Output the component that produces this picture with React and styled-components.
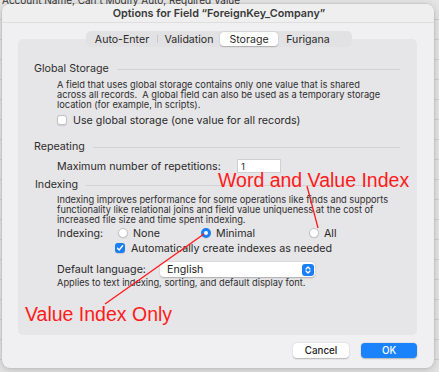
import React from 'react';
import styled, { createGlobalStyle } from 'styled-components';

const Global = createGlobalStyle`
  html, body { margin: 0; padding: 0; }
  body { font-family: Inter, "Liberation Sans", sans-serif; }
`;

const Page = styled.div`
  position: relative;
  width: 439px;
  height: 372px;
  overflow: hidden;
  background: repeating-linear-gradient(180deg, #e4e4e4 0px, #e4e4e4 19px, #cfcfcf 19px, #cfcfcf 20px);
  padding: 4px 0 0 2px;
  box-sizing: border-box;
`;

const BackText = styled.div`
  position: absolute;
  top: -6px;
  left: 2px;
  font-size: 10px;
  color: #333;
  white-space: nowrap;
`;

const Dialog = styled.div`
  width: 432px;
  height: 364px;
  background: #f0eff1;
  border-radius: 8px;
  box-shadow: 0 0 0 0.5px #bdbdbd, 0 2px 8px rgba(0, 0, 0, 0.18);
  display: flex;
  flex-direction: column;
  overflow: hidden;
`;

const TitleBar = styled.div`
  height: 18px;
  display: flex;
  align-items: center;
  justify-content: center;
  font-size: 10.8px;
  font-weight: 600;
  color: #3a3a3a;
  border-bottom: 1px solid #dedede;
  background: #efeff0;
  flex-shrink: 0;
  padding-left: 2px;
`;

const Body = styled.div`
  padding: 8px 17px 0 16px;
  display: flex;
  flex-direction: column;
  align-items: stretch;
`;

const Tabs = styled.div`
  align-self: center;
  margin-left: 3px;
  display: flex;
  align-items: center;
  height: 16px;
  padding: 0 1px;
  background: #e2e1e3;
  border-radius: 5px;
  margin-bottom: -8px;
  position: relative;
  z-index: 1;
  width: 266px;
  box-sizing: border-box;
`;

const Tab = styled.div`
  height: 14px;
  display: flex;
  align-items: center;
  justify-content: center;
  font-size: 10.6px;
  color: #2a2a2a;
  width: ${p => p.$w}px;
  border-radius: 4px;
  background: ${p => (p.$active ? '#ffffff' : 'transparent')};
  box-shadow: ${p => (p.$active ? '0 0.5px 1.5px rgba(0,0,0,0.25)' : 'none')};
`;

const TabSep = styled.div`
  width: 1px;
  height: 8px;
  background: #c9c9c9;
`;

const Box = styled.div`
  height: 296px;
  background: #e6e5e7;
  border-radius: 5px;
  padding: 23px 17px 0 16px;
  box-sizing: border-box;
  display: flex;
  flex-direction: column;
`;

const Section = styled.div`
  display: flex;
  align-items: center;
  gap: 8px;
  font-size: 10.7px;
  color: #2e2e2e;
  height: 12px;
  margin-top: ${p => p.$mt || 0}px;
  padding-left: ${p => p.$pl || 0}px;
  &::after {
    content: '';
    flex: 1;
    border-top: 1px solid #d2d2d4;
    margin-top: 2px;
  }
`;

const Desc = styled.div`
  font-size: 9.25px;
  line-height: 10px;
  color: #2e2e2e;
  padding-left: 23px;
  margin-top: ${p => p.$mt || 0}px;
  white-space: nowrap;
`;

const Row = styled.div`
  display: flex;
  align-items: center;
  font-size: 10.7px;
  color: #2a2a2a;
  padding-left: ${p => p.$pl || 23}px;
  margin-top: ${p => p.$mt || 0}px;
  height: ${p => p.$h || 14}px;
`;

const CheckBox = styled.span`
  width: 10px;
  height: 10px;
  border-radius: 3px;
  box-sizing: border-box;
  background: ${p => (p.$on ? '#1a7ff5' : '#ffffff')};
  border: ${p => (p.$on ? 'none' : '0.5px solid #c4c4c4')};
  box-shadow: 0 0.5px 1px rgba(0,0,0,0.12);
  display: inline-flex;
  align-items: center;
  justify-content: center;
  margin-right: 6px;
  flex-shrink: 0;
`;

const Radio = styled.span`
  width: 10px;
  height: 10px;
  border-radius: 50%;
  box-sizing: border-box;
  background: ${p => (p.$on ? '#1a7ff5' : '#ffffff')};
  border: ${p => (p.$on ? 'none' : '0.5px solid #c4c4c4')};
  box-shadow: 0 0.5px 1px rgba(0,0,0,0.12);
  display: inline-flex;
  align-items: center;
  justify-content: center;
  margin-right: 5px;
  flex-shrink: 0;
  &::after {
    content: '';
    width: 4px;
    height: 4px;
    border-radius: 50%;
    background: #fff;
    display: ${p => (p.$on ? 'block' : 'none')};
  }
`;

const Option = styled.label`
  display: flex;
  align-items: center;
  width: ${p => p.$w}px;
`;

const Label = styled.span`
  width: ${p => p.$w}px;
  flex-shrink: 0;
`;

const Field = styled.div`
  width: 44px;
  height: 14px;
  background: #fff;
  border: 0.5px solid #d0d0d0;
  box-sizing: border-box;
  font-size: 9.5px;
  display: flex;
  align-items: center;
  padding-left: 3px;
`;

const Popup = styled.div`
  width: 155px;
  height: 15px;
  border-radius: 4px;
  background: #fff;
  box-shadow: 0 0.5px 1.5px rgba(0,0,0,0.25);
  display: flex;
  align-items: center;
  justify-content: space-between;
  padding: 0 1.5px 0 7px;
  box-sizing: border-box;
  font-size: 10.7px;
  color: #222;
`;

const Stepper = styled.span`
  width: 12px;
  height: 12px;
  border-radius: 3px;
  background: #1a7ff5;
  display: inline-flex;
  align-items: center;
  justify-content: center;
`;

const Footer = styled.div`
  display: flex;
  justify-content: flex-end;
  gap: 12px;
  padding: 8px 17px 0 0;
`;

const Button = styled.div`
  width: 56px;
  height: 15px;
  border-radius: 4px;
  display: flex;
  align-items: center;
  justify-content: center;
  font-size: 9.8px;
  font-weight: 500;
  color: ${p => (p.$primary ? '#fff' : '#222')};
  background: ${p => (p.$primary ? '#1a82fb' : '#fff')};
  box-shadow: 0 0.5px 1.5px rgba(0,0,0,0.25);
`;

const Note = styled.div`
  position: absolute;
  left: ${p => p.$x}px;
  top: ${p => p.$y}px;
  font-family: "Liberation Sans", Arial, sans-serif;
  font-size: 19.5px;
  line-height: 14px;
  color: #ff1a1a;
  white-space: nowrap;
`;

const Overlay = styled.svg`
  position: absolute;
  left: 0;
  top: 0;
  pointer-events: none;
`;

export default function App() {
  return (
    <>
      <Global />
      <Page>
        <BackText>Account Name, Can't Modify Auto, Required Value</BackText>
        <Dialog>
          <TitleBar>Options for Field “ForeignKey_Company”</TitleBar>
          <Body>
            <Tabs>
              <Tab $w={70}>Auto-Enter</Tab>
              <TabSep />
              <Tab $w={62}>Validation</Tab>
              <Tab $w={58} $active>Storage</Tab>
              <Tab $w={60}>Furigana</Tab>
            </Tabs>
            <Box>
              <Section>Global Storage</Section>
              <Desc $mt={6}>
                A field that uses global storage contains only one value that is shared<br />
                across all records.&nbsp; A global field can also be used as a temporary storage<br />
                location (for example, in scripts).
              </Desc>
              <Row $mt={3}>
                <CheckBox />
                Use global storage (one value for all records)
              </Row>
              <Section $mt={13}>Repeating</Section>
              <Row $mt={7}>
                <Label $w={180}>Maximum number of repetitions:</Label>
                <Field>1</Field>
              </Row>
              <Section $mt={5} $pl={1}>Indexing</Section>
              <Desc $mt={5}>
                Indexing improves performance for some operations like finds and supports<br />
                functionality like relational joins and field value uniqueness at the cost of<br />
                increased file size and time spent indexing.
              </Desc>
              <Row $mt={1}>
                <Label $w={61}>Indexing:</Label>
                <Option $w={83}><Radio />None</Option>
                <Option $w={108}><Radio $on />Minimal</Option>
                <Option $w={40}><Radio />All</Option>
              </Row>
              <Row $mt={1} $pl={81}>
                <CheckBox $on>
                  <svg width="8" height="8" viewBox="0 0 8 8">
                    <path d="M1.5 4.2 L3.2 6 L6.6 1.8" fill="none" stroke="#fff" strokeWidth="1.4" strokeLinecap="round" strokeLinejoin="round" />
                  </svg>
                </CheckBox>
                Automatically create indexes as needed
              </Row>
              <Row $mt={7} $h={15}>
                <Label $w={103}>Default language:</Label>
                <Popup>
                  English
                  <Stepper>
                    <svg width="8" height="10" viewBox="0 0 8 10">
                      <path d="M2 4 L4 2 L6 4 M2 6 L4 8 L6 6" fill="none" stroke="#fff" strokeWidth="1.2" strokeLinecap="round" strokeLinejoin="round" />
                    </svg>
                  </Stepper>
                </Popup>
              </Row>
              <Desc $mt={1}>Applies to text indexing, sorting, and default display font.</Desc>
            </Box>
          </Body>
          <Footer>
            <Button>Cancel</Button>
            <Button $primary>OK</Button>
          </Footer>
        </Dialog>
        <Note $x={218} $y={173}>Word and Value Index</Note>
        <Note $x={25} $y={307}>Value Index Only</Note>
        <Overlay width="439" height="372" viewBox="0 0 439 372">
          <line x1="307" y1="186" x2="318" y2="228" stroke="#ff1a1a" strokeWidth="1.3" />
          <line x1="204" y1="234" x2="105" y2="304" stroke="#ff1a1a" strokeWidth="1.3" />
        </Overlay>
      </Page>
    </>
  );
}
